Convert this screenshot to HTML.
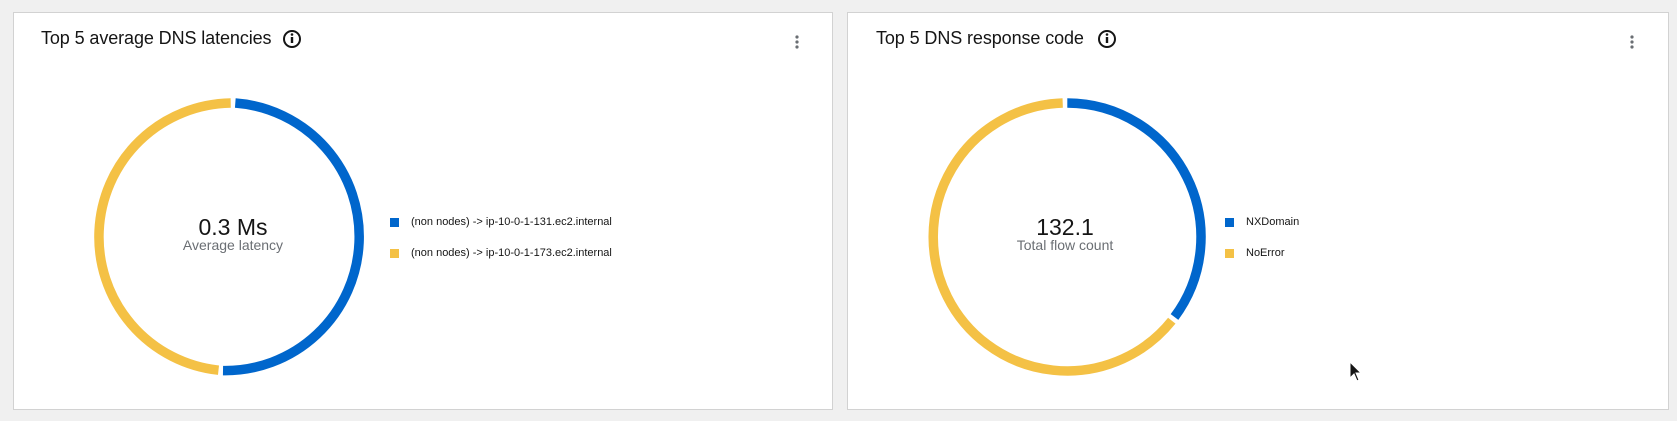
<!DOCTYPE html>
<html><head><meta charset="utf-8"><style>
body{margin:0;width:1677px;height:421px;background:#f0f0f0;font-family:"Liberation Sans",sans-serif;position:relative;overflow:hidden}
.card{position:absolute;top:12px;height:398px;background:#fff;border:1px solid #d2d2d2;box-sizing:border-box}
.t{position:absolute;top:28px;font-size:18px;color:#151515;white-space:nowrap;letter-spacing:-0.1px}
.abs{position:absolute}
.lg{position:absolute;font-size:11px;color:#151515;white-space:nowrap}
.sq{position:absolute;width:9px;height:9px}
</style></head><body>
<div class="card" style="left:13px;width:820px"></div>
<div class="card" style="left:847px;width:822px"></div>

<div class="t" style="left:41px">Top 5 average DNS latencies</div>
<div class="t" style="left:876px">Top 5 DNS response code</div>

<svg class="abs" style="left:0;top:0" width="1677" height="421">
 <g fill="none" stroke="#151515" stroke-width="2">
  <circle cx="292" cy="39" r="8"/><circle cx="1107" cy="39" r="8"/>
 </g>
 <g fill="#151515">
  <rect x="290.8" y="37" width="2.4" height="6"/><circle cx="292" cy="34.5" r="1.3"/>
  <rect x="1105.8" y="37" width="2.4" height="6"/><circle cx="1107" cy="34.5" r="1.3"/>
  <circle cx="797" cy="37" r="1.6" fill="#6a6e73"/><circle cx="797" cy="42" r="1.6" fill="#6a6e73"/><circle cx="797" cy="47" r="1.6" fill="#6a6e73"/>
  <circle cx="1632" cy="37" r="1.6" fill="#6a6e73"/><circle cx="1632" cy="42" r="1.6" fill="#6a6e73"/><circle cx="1632" cy="47" r="1.6" fill="#6a6e73"/>
 </g>
 <g transform="translate(4,0)" fill="none" stroke-width="9.5">
  <path d="M231.3 103 A134 134 0 0 1 219 370.6" stroke="#0066cc"/>
  <path d="M214.5 370.2 A134 134 0 0 1 226.7 103" stroke="#f4c145"/>
 </g>
 <g transform="translate(-2,0)" fill="none" stroke-width="9.5">
  <path d="M1069.3 103 A134 134 0 0 1 1176.5 317" stroke="#0066cc"/>
  <path d="M1173.8 320.7 A134 134 0 1 1 1064.7 103" stroke="#f4c145"/>
 </g>
 <path d="M1350 362 L1350 378 L1354 374 L1357 381 L1359 380 L1356 373 L1361 373 Z" fill="#151515" stroke="#fff" stroke-width="1"/>
</svg>

<div class="abs" style="left:133px;width:200px;text-align:center;top:214px;font-size:23px;color:#151515">0.3 Ms</div>
<div class="abs" style="left:133px;width:200px;text-align:center;top:237px;font-size:14px;color:#6a6e73">Average latency</div>
<div class="abs" style="left:965px;width:200px;text-align:center;top:214px;font-size:23px;color:#151515">132.1</div>
<div class="abs" style="left:965px;width:200px;text-align:center;top:237px;font-size:14px;color:#6a6e73">Total flow count</div>

<div class="sq" style="left:390px;top:218px;background:#0066cc"></div>
<div class="lg" style="left:411px;top:216px">(non nodes) -&gt; ip-10-0-1-131.ec2.internal</div>
<div class="sq" style="left:390px;top:249px;background:#f4c145"></div>
<div class="lg" style="left:411px;top:247px">(non nodes) -&gt; ip-10-0-1-173.ec2.internal</div>

<div class="sq" style="left:1225px;top:218px;background:#0066cc"></div>
<div class="lg" style="left:1246px;top:216px">NXDomain</div>
<div class="sq" style="left:1225px;top:249px;background:#f4c145"></div>
<div class="lg" style="left:1246px;top:247px">NoError</div>
</body></html>
